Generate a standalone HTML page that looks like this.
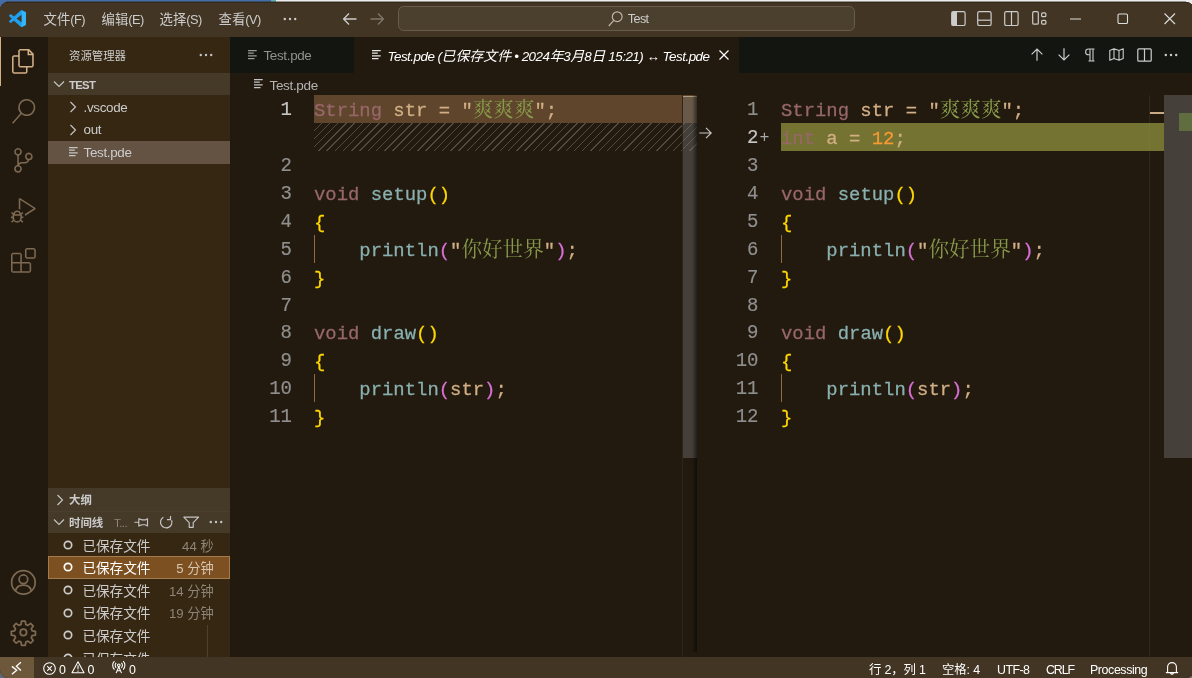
<!DOCTYPE html>
<html lang="zh-CN">
<head>
<meta charset="utf-8">
<title>Test.pde - Test - Visual Studio Code</title>
<style>
*{box-sizing:border-box;margin:0;padding:0}
html,body{width:1192px;height:678px;overflow:hidden;background:#221a0f}
body{position:relative;font-family:"Liberation Sans","Noto Sans CJK SC",sans-serif;font-size:13.4px;color:#cccccc}
.a{position:absolute}
.t{white-space:nowrap}
.cj{font-size:13.900px;letter-spacing:0}
svg{display:block;overflow:visible}
#back{left:0;top:0;width:1192px;height:12px;background:linear-gradient(90deg,#456ea8 0,#456ea8 271px,#5fb0b0 271px,#5fb0b0 276px,#ececec 276px)}
#back2{left:0;top:660px;width:12px;height:18px;background:#5e6a80}
#win{left:0;top:1.5px;width:1193.500px;height:676.500px;border-radius:8px;overflow:hidden;background:#221a0f}
#w{left:0;top:-1.5px;width:1192px;height:678px;will-change:transform}
.ln,.cl{position:absolute;height:27.87px;line-height:27.87px;font-family:"Liberation Mono","Noto Serif CJK SC",monospace;font-size:18.900px;white-space:pre;transform-origin:0 19.500px;transform:translateY(2.600px) scaleY(1.020);-webkit-text-stroke:0.250px currentColor}
.ln{text-align:right;color:#858585;font-size:19px;transform:translateY(2.500px) scaleY(1.060);-webkit-text-stroke:0.150px currentColor}
.cl{color:#d3af86}
.cl i{display:inline-block;line-height:0;font-style:normal;font-family:"Noto Serif CJK SC",serif;font-size:20.600px;letter-spacing:0;transform:translateY(0.300px) scaleY(1.000);-webkit-text-stroke:0}
.k{color:#98676a}.f{color:#8ab1b0}.s{color:#889b4a}.n{color:#f79a32}.y{color:#ffd700}.p{color:#da70d6}
</style>
</head>
<body>
<div id="back" class="a"></div>
<div id="back2" class="a"></div>
<div class="a" style="left:1182px;top:668px;width:10px;height:10px;background:#77726a"></div>
<div class="a" style="left:6px;top:1px;width:1180px;height:1px;background:rgba(51,41,26,0.450)"></div>
<div id="win" class="a"><div id="w" class="a">
<div class="a" style="left:-1px;top:1.5px;width:1194px;height:35.0px;background:#423523;"></div>
<div class="a" style="left:-1px;top:1.5px;width:1194px;height:1.1px;background:#33291a;"></div>
<svg class="a" style="left:8.8px;top:10px" width="17" height="17.2" viewBox="0 0 100 100" ><path d="M70.9119 99.3171C72.4869 99.9307 74.2828 99.8914 75.8725 99.1264L96.4608 89.2197C98.6242 88.1787 100 85.9892 100 83.5872V16.4133C100 14.0113 98.6243 11.8218 96.4609 10.7808L75.8725 0.873756C73.7862 -0.130129 71.3446 0.11576 69.5135 1.44695C69.252 1.63711 69.0028 1.84943 68.769 2.08341L29.3551 38.0415L12.1872 25.0096C10.589 23.7965 8.35363 23.8959 6.86933 25.2461L1.36303 30.2549C-0.452552 31.9064 -0.454633 34.7627 1.35853 36.417L16.2471 50.0001L1.35853 63.5832C-0.454633 65.2374 -0.452552 68.0938 1.36303 69.7453L6.86933 74.7541C8.35363 76.1043 10.589 76.2037 12.1872 74.9905L29.3551 61.9587L68.769 97.9167C69.3925 98.5406 70.1246 99.0104 70.9119 99.3171ZM75.0152 27.2989L45.1091 50.0001L75.0152 72.7012V27.2989Z" fill="#1f9fef" fill-rule="evenodd"/><path d="M75 0.500L96.500 10.800C98.600 11.800 100 14 100 16.400V83.600C100 86 98.600 88.200 96.500 89.200L75 99.500Z" fill="#35b4f8"/></svg>
<div class="a t" style="left:43.5px;top:2.3px;height:35px;line-height:35px;font-size:13.4px;color:#cccccc;">文件<span style="font-size:12.800px;letter-spacing:-0.600px">(F)</span></div>
<div class="a t" style="left:101.5px;top:2.3px;height:35px;line-height:35px;font-size:13.4px;color:#cccccc;">编辑<span style="font-size:12.800px;letter-spacing:-0.600px">(E)</span></div>
<div class="a t" style="left:159.5px;top:2.3px;height:35px;line-height:35px;font-size:13.4px;color:#cccccc;">选择<span style="font-size:12.800px;letter-spacing:-0.600px">(S)</span></div>
<div class="a t" style="left:218.5px;top:2.3px;height:35px;line-height:35px;font-size:13.4px;color:#cccccc;">查看<span style="font-size:12.800px;letter-spacing:-0.600px">(V)</span></div>
<svg class="a" style="left:282px;top:16px" width="16" height="6" viewBox="0 0 16 6" ><circle cx="2.8" cy="3" r="1.2" fill="#cccccc"/><circle cx="8.0" cy="3" r="1.2" fill="#cccccc"/><circle cx="13.2" cy="3" r="1.2" fill="#cccccc"/></svg>
<svg class="a" style="left:342px;top:11.5px" width="16" height="14" viewBox="0 0 16 14" fill="none" stroke="#cccccc" stroke-width="1.3" ><path d="M14.500 7H2M7 1.500L1.600 7L7 12.500"/></svg>
<svg class="a" style="left:369px;top:11.5px" width="16" height="14" viewBox="0 0 16 14" fill="none" stroke="#7f776b" stroke-width="1.3" ><path d="M1.500 7H14M9 1.500L14.400 7L9 12.500"/></svg>
<div class="a" style="left:398.3px;top:5.9px;width:456.8px;height:25.4px;background:#4b3f2e;border-radius:5.500px;border:1px solid #675c4a"></div>
<svg class="a" style="left:607.6px;top:10.6px" width="15" height="15.5" viewBox="0 0 15 15.500" fill="none" stroke="#c0b8aa" stroke-width="1.15" ><path d="M6 9.200L0.800 15M14.100 5.700A4.900 4.900 0 1 1 4.300 5.700A4.900 4.900 0 1 1 14.100 5.700"/></svg>
<div class="a t" style="left:627.8px;top:7.2px;height:24px;line-height:24px;font-size:12.6px;color:#cccccc;letter-spacing:-0.6px;">Test</div>
<svg class="a" style="left:950.5px;top:10.9px" width="16" height="16" viewBox="0 0 16 16" fill="none" stroke="#cccccc" stroke-width="1.200"><rect x="0.700" y="0.700" width="13.400" height="13.800" rx="1.600"/><path d="M1 1H6V14.200H1Z" fill="#cccccc" stroke="none"/></svg>
<svg class="a" style="left:977.3px;top:10.9px" width="16" height="16" viewBox="0 0 16 16" fill="none" stroke="#cccccc" stroke-width="1.200"><rect x="0.700" y="0.700" width="13.400" height="13.800" rx="1.600"/><path d="M1 9.200H13.800"/></svg>
<svg class="a" style="left:1004.1999999999999px;top:10.9px" width="16" height="16" viewBox="0 0 16 16" fill="none" stroke="#cccccc" stroke-width="1.200"><rect x="0.700" y="0.700" width="13.400" height="13.800" rx="1.600"/><path d="M7.500 1V14.200"/></svg>
<svg class="a" style="left:1031.7px;top:11.4px" width="16" height="15" viewBox="0 0 16 15" fill="none" stroke="#cccccc" stroke-width="1.200"><rect x="0.700" y="0.700" width="5.600" height="12.500" rx="1.300"/><rect x="9.600" y="1.800" width="4.300" height="3.900" rx="1.300"/><rect x="9.600" y="9.300" width="4.300" height="3.900" rx="1.300"/></svg>
<svg class="a" style="left:1070px;top:17.6px" width="12" height="2" viewBox="0 0 12 2" fill="none" stroke="#dddddd" stroke-width="1.0" ><path d="M0 1H11"/></svg>
<svg class="a" style="left:1117px;top:13px" width="12" height="12" viewBox="0 0 12 12" fill="none" stroke="#dddddd" stroke-width="1.100"><rect x="1" y="1" width="9.500" height="9.500" rx="1.300"/></svg>
<svg class="a" style="left:1164px;top:13px" width="12" height="12" viewBox="0 0 12 12" fill="none" stroke="#dddddd" stroke-width="1.1" ><path d="M0.500 0.500L11 11M11 0.500L0.500 11"/></svg>
<div class="a" style="left:-1px;top:36.5px;width:49.4px;height:620.1px;background:#221a0f;"></div>
<div class="a" style="left:-1px;top:36.5px;width:2.2px;height:49.6px;background:#d3af86;"></div>
<svg class="a" style="left:11.2px;top:49px" width="24.8" height="24.8" viewBox="0 0 24 24" ><path d="M17.5 0h-9L7 1.500V6H2.500L1 7.500v15.070L2.500 24h12.070L16 22.570V18h4.700l1.300-1.430V4.500L17.500 0zm0 2.120l2.380 2.380H17.500V2.120zm-3 20.380h-12v-15H7v9.070L8.500 18h6v4.500zm6-6h-12v-15H16V6h4.500v10.500z" fill="#d3af86"/></svg>
<svg class="a" style="left:11.2px;top:98.7px" width="24.8" height="24.8" viewBox="0 0 24 24" ><path d="M15.250 0a8.250 8.250 0 0 0-6.180 13.720L1 22.880l1.120 1 8.050-9.120A8.251 8.251 0 1 0 15.250.010V0zm0 15a6.750 6.750 0 1 1 0-13.500 6.750 6.750 0 0 1 0 13.500z" fill="#7e6952"/></svg>
<svg class="a" style="left:11.2px;top:148.4px" width="24.8" height="24.8" viewBox="0 0 24 24" ><path d="M21.007 8.222A3.738 3.738 0 0 0 15.045 5.200a3.737 3.737 0 0 0 1.156 6.583 2.988 2.988 0 0 1-2.668 1.670h-2.990a4.456 4.456 0 0 0-2.989 1.165V7.400a3.737 3.737 0 1 0-1.494 0v9.117a3.776 3.776 0 1 0 1.816.099 2.990 2.990 0 0 1 2.668-1.667h2.990a4.484 4.484 0 0 0 4.223-3.039 3.736 3.736 0 0 0 3.250-3.687zM4.565 3.738a2.242 2.242 0 1 1 4.484 0 2.242 2.242 0 0 1-4.484 0zm4.484 16.441a2.242 2.242 0 1 1-4.484 0 2.242 2.242 0 0 1 4.484 0zm8.221-9.715a2.242 2.242 0 1 1 0-4.485 2.242 2.242 0 0 1 0 4.485z" fill="#7e6952"/></svg>
<svg class="a" style="left:11.2px;top:198.1px" width="24.8" height="24.8" viewBox="0 0 24 24" ><path d="M10.940 13.500l-1.320 1.320a3.730 3.730 0 0 0-7.240 0L1.060 13.500 0 14.560l1.720 1.720-.220.220V18H0v1.500h1.500v.080c.077.489.214.966.410 1.420L0 22.940 1.060 24l1.650-1.650A4.308 4.308 0 0 0 6 24a4.310 4.310 0 0 0 3.290-1.650L10.940 24 12 22.940 10.090 21c.198-.464.336-.951.410-1.450v-.1H12V18h-1.500v-1.500l-.220-.220L12 14.560l-1.060-1.060zM6 13.500a2.250 2.250 0 0 1 2.250 2.250h-4.500A2.250 2.250 0 0 1 6 13.500zm3 6a3.330 3.330 0 0 1-3 3 3.330 3.330 0 0 1-3-3v-2.250h6v2.250zm14.760-9.900v1.260L13.500 17.370V15.600l8.500-5.370L9 2v9.460a5.070 5.070 0 0 0-1.500-.720V.630L8.640 0l15.120 9.600z" fill="#7e6952"/></svg>
<svg class="a" style="left:11.2px;top:247.8px" width="24.8" height="24.8" viewBox="0 0 24 24" ><path d="M13.500 1.500L15 0h7.500L24 1.500V9l-1.500 1.500H15L13.500 9V1.500zm1.500 0V9h7.500V1.500H15zM0 15V6l1.500-1.500H9L10.500 6v7.500H18l1.500 1.500v7.500L18 24H1.500L0 22.500V15zm9-1.500V6H1.500v7.500H9zM9 15H1.500v7.500H9V15zm1.500 7.500H18V15h-7.500v7.500z" fill="#7e6952"/></svg>
<svg class="a" style="left:10.899999999999999px;top:570.1px" width="24.8" height="24.8" viewBox="0 0 24 24" fill="none" stroke="#7e6952" stroke-width="1.650"><circle cx="12" cy="12" r="11.400"/><circle cx="12" cy="9" r="4.200"/><path d="M4.300 20.200Q5.600 14.600 12 14.600Q18.400 14.600 19.700 20.200"/></svg>
<svg class="a" style="left:11.1px;top:619.7px" width="24.8" height="24.8" viewBox="0 0 24 24" fill="none" stroke="#7e6952" stroke-width="1.600" stroke-linejoin="round"><g transform="translate(12 12) scale(1.060) translate(-12 -12)"><circle cx="12" cy="12" r="2.900"/><path d="M10.300 1.800h3.400l.5 3 1.900.8 2.500-1.800 2.400 2.400-1.800 2.500.8 1.900 3 .5v3.400l-3 .5-.8 1.900 1.800 2.500-2.400 2.400-2.500-1.800-1.900.8-.5 3h-3.400l-.5-3-1.900-.8-2.500 1.800-2.400-2.400 1.800-2.500-.8-1.900-3-.5v-3.400l3-.5.8-1.900-1.800-2.500 2.400-2.400 2.500 1.800 1.900-.8z"/></g></svg>
<div class="a" style="left:48.4px;top:36.5px;width:181.9px;height:620.1px;background:#362712;"></div>
<div class="a t" style="left:69px;top:38.4px;height:36px;line-height:36px;font-size:11.4px;color:#cccccc;">资源管理器</div>
<svg class="a" style="left:198px;top:51.5px" width="16" height="6" viewBox="0 0 16 6" ><circle cx="2.8" cy="3" r="1.2" fill="#c5c5c5"/><circle cx="8.0" cy="3" r="1.2" fill="#c5c5c5"/><circle cx="13.2" cy="3" r="1.2" fill="#c5c5c5"/></svg>
<div class="a" style="left:48.4px;top:72.9px;width:181.9px;height:22.3px;background:#453928;"></div>
<svg class="a" style="left:53.2px;top:80.30000000000001px" width="12" height="8" viewBox="0 0 12 8" fill="none" stroke="#c5c5c5" stroke-width="1.15" ><path d="M1 1.5L6 6.5L11 1.5"/></svg>
<div class="a t" style="left:69px;top:74.10000000000001px;height:22.87px;line-height:22.87px;font-size:11.4px;color:#cccccc;letter-spacing:-0.75px;font-weight:bold;">TEST</div>
<svg class="a" style="left:68.5px;top:100.8px" width="8" height="12" viewBox="0 0 8 12" fill="none" stroke="#c5c5c5" stroke-width="1.15" ><path d="M1.5 1L6.5 6L1.5 11"/></svg><div class="a t" style="left:83.6px;top:96.60000000000001px;height:22.87px;line-height:22.87px;font-size:13.4px;color:#cccccc;letter-spacing:-0.33px;">.vscode</div>
<svg class="a" style="left:68.5px;top:123.67000000000002px" width="8" height="12" viewBox="0 0 8 12" fill="none" stroke="#c5c5c5" stroke-width="1.15" ><path d="M1.5 1L6.5 6L1.5 11"/></svg><div class="a t" style="left:83.6px;top:119.47000000000001px;height:22.87px;line-height:22.87px;font-size:13.4px;color:#cccccc;letter-spacing:-0.33px;">out</div>
<div class="a" style="left:48.4px;top:140.94px;width:181.9px;height:22.87px;background:#645342;"></div><svg class="a" style="left:68.6px;top:147.24px" width="9" height="9.2" viewBox="0 0 9 9.2" ><path d="M0 0.550H8.700M0 3.220H5.800M0 5.880H8.700M0 8.550H6.500" stroke="#c5c5c5" stroke-width="1.250" fill="none"/></svg><div class="a t" style="left:83.6px;top:142.34px;height:22.87px;line-height:22.87px;font-size:13.4px;color:#cccccc;letter-spacing:-0.33px;">Test.pde</div>
<div class="a" style="left:48.4px;top:488.2px;width:181.9px;height:45.2px;background:#453928;"></div>
<div class="a" style="left:48.4px;top:510.5px;width:181.9px;height:1px;background:#4a3e2e;"></div>
<svg class="a" style="left:56px;top:493.7px" width="8" height="12" viewBox="0 0 8 12" fill="none" stroke="#c5c5c5" stroke-width="1.15" ><path d="M1.5 1L6.5 6L1.5 11"/></svg>
<div class="a t" style="left:69px;top:489.2px;height:22.87px;line-height:22.87px;font-size:11.4px;color:#cccccc;font-weight:bold;">大纲</div>
<svg class="a" style="left:53.2px;top:518.4px" width="12" height="8" viewBox="0 0 12 8" fill="none" stroke="#c5c5c5" stroke-width="1.15" ><path d="M1 1.5L6 6.5L11 1.5"/></svg>
<div class="a t" style="left:69px;top:511.8px;height:22.87px;line-height:22.87px;font-size:11.4px;color:#cccccc;font-weight:bold;">时间线</div>
<div class="a t" style="left:114px;top:511.8px;height:22.87px;line-height:22.87px;font-size:11.4px;color:#8e8578;letter-spacing:-0.5px;">T...</div>
<svg class="a" style="left:0px;top:0px" width="30" height="30" viewBox="0 0 30 30" fill="none" stroke="#c5c5c5" stroke-width="1.15" ><path d="M134.400 522.200H138.800M138.800 518.200V526.400M147.500 518.200V526.400M138.800 518.700L142.100 519.900H145.300L147.500 518.700M138.800 525.900L142.100 524.700H145.300L147.500 525.900"/></svg>
<svg class="a" style="left:0px;top:0px" width="30" height="30" viewBox="0 0 30 30" fill="none" stroke="#c5c5c5" stroke-width="1.2" ><path d="M163.400 517.200A5.700 5.700 0 1 0 171.600 520.200M170.500 516V519.700H166.900"/></svg>
<svg class="a" style="left:0px;top:0px" width="30" height="30" viewBox="0 0 30 30" fill="none" stroke="#c5c5c5" stroke-width="1.15" stroke-linejoin="round"><path d="M183.800 517.100H198.600L193.200 522.600V527.300H189.200V522.600Z"/></svg>
<svg class="a" style="left:207.5px;top:519.3px" width="16" height="6" viewBox="0 0 16 6" ><circle cx="2.8" cy="3" r="1.2" fill="#c5c5c5"/><circle cx="8.0" cy="3" r="1.2" fill="#c5c5c5"/><circle cx="13.2" cy="3" r="1.2" fill="#c5c5c5"/></svg>
<svg class="a" style="left:63px;top:539.8px" width="10" height="10" viewBox="0 0 10 10" ><circle cx="5" cy="5" r="3.700" fill="none" stroke="#cccccc" stroke-width="1.700"/></svg>
<div class="a t" style="left:82.4px;top:535.5px;height:22.6px;line-height:22.6px;font-size:13.6px;color:#cccccc;">已保存文件</div>
<div class="a t" style="right:978.4px;top:535.5px;height:22.6px;line-height:22.6px;font-size:13.2px;color:#8e8578;">44 秒</div>
<div class="a" style="left:48.4px;top:556.1px;width:181.9px;height:22.6px;background:#7c5021;outline:1px solid #a57a4c;outline-offset:-1px;"></div>
<svg class="a" style="left:63px;top:562.4px" width="10" height="10" viewBox="0 0 10 10" ><circle cx="5" cy="5" r="3.700" fill="none" stroke="#ffffff" stroke-width="1.700"/></svg>
<div class="a t" style="left:82.4px;top:558.1px;height:22.6px;line-height:22.6px;font-size:13.6px;color:#ffffff;">已保存文件</div>
<div class="a t" style="right:978.4px;top:558.1px;height:22.6px;line-height:22.6px;font-size:13.2px;color:#d8c6b0;">5 分钟</div>
<svg class="a" style="left:63px;top:585.0px" width="10" height="10" viewBox="0 0 10 10" ><circle cx="5" cy="5" r="3.700" fill="none" stroke="#cccccc" stroke-width="1.700"/></svg>
<div class="a t" style="left:82.4px;top:580.7px;height:22.6px;line-height:22.6px;font-size:13.6px;color:#cccccc;">已保存文件</div>
<div class="a t" style="right:978.4px;top:580.7px;height:22.6px;line-height:22.6px;font-size:13.2px;color:#8e8578;">14 分钟</div>
<svg class="a" style="left:63px;top:607.6px" width="10" height="10" viewBox="0 0 10 10" ><circle cx="5" cy="5" r="3.700" fill="none" stroke="#cccccc" stroke-width="1.700"/></svg>
<div class="a t" style="left:82.4px;top:603.3000000000001px;height:22.6px;line-height:22.6px;font-size:13.6px;color:#cccccc;">已保存文件</div>
<div class="a t" style="right:978.4px;top:603.3000000000001px;height:22.6px;line-height:22.6px;font-size:13.2px;color:#8e8578;">19 分钟</div>
<svg class="a" style="left:63px;top:630.2px" width="10" height="10" viewBox="0 0 10 10" ><circle cx="5" cy="5" r="3.700" fill="none" stroke="#cccccc" stroke-width="1.700"/></svg>
<div class="a t" style="left:82.4px;top:625.9000000000001px;height:22.6px;line-height:22.6px;font-size:13.6px;color:#cccccc;">已保存文件</div>
<svg class="a" style="left:63px;top:652.8000000000001px" width="10" height="10" viewBox="0 0 10 10" ><circle cx="5" cy="5" r="3.700" fill="none" stroke="#cccccc" stroke-width="1.700"/></svg>
<div class="a t" style="left:82.4px;top:648.5000000000001px;height:22.6px;line-height:22.6px;font-size:13.6px;color:#cccccc;">已保存文件</div>
<div class="a" style="left:206.7px;top:624.7px;width:1px;height:33px;background:#4d402c;"></div>
<div class="a" style="left:230.3px;top:36.5px;width:961.7px;height:36.099999999999994px;background:#131510;"></div>
<svg class="a" style="left:248.3px;top:49.8px" width="9" height="9.2" viewBox="0 0 9 9.2" ><path d="M0 0.550H8.700M0 3.220H5.800M0 5.880H8.700M0 8.550H6.500" stroke="#9a9a94" stroke-width="1.250" fill="none"/></svg>
<div class="a t" style="left:263.5px;top:37.8px;height:36px;line-height:36px;font-size:13.4px;color:#92928c;letter-spacing:-0.33px;">Test.pde</div>
<div class="a" style="left:354px;top:36.5px;width:385px;height:36.099999999999994px;background:#221a0f;"></div>
<svg class="a" style="left:372.3px;top:49.8px" width="9" height="9.2" viewBox="0 0 9 9.2" ><path d="M0 0.550H8.700M0 3.220H5.800M0 5.880H8.700M0 8.550H6.500" stroke="#e8e8e8" stroke-width="1.250" fill="none"/></svg>
<div class="a t" style="left:387.5px;top:38.0px;height:36px;line-height:36px;font-size:13.4px;color:#ffffff;letter-spacing:-0.5px;font-style:italic;">Test.pde (<span class="cj">已保存文件</span> • 2024<span class="cj">年</span>3<span class="cj">月</span>8<span class="cj">日</span> 15:21) ↔ Test.pde</div>
<svg class="a" style="left:718.5px;top:50px" width="10" height="10" viewBox="0 0 10 10" fill="none" stroke="#ffffff" stroke-width="1.2" ><path d="M0.500 0.500L9.500 9.500M9.500 0.500L0.500 9.500"/></svg>
<svg class="a" style="left:1031px;top:47.8px" width="12" height="13" viewBox="0 0 12 13" fill="none" stroke="#cccccc" stroke-width="1.2" ><path d="M6 12.800V1M0.600 6.400L6 1L11.400 6.400"/></svg>
<svg class="a" style="left:1057.6px;top:47.8px" width="12" height="13" viewBox="0 0 12 13" fill="none" stroke="#cccccc" stroke-width="1.2" ><path d="M6 0.200V12M0.600 6.600L6 12L11.400 6.600"/></svg>
<svg class="a" style="left:1084.5px;top:47.5px" width="10" height="14" viewBox="0 0 10 14" fill="none" stroke="#cccccc" stroke-width="1.1" ><path d="M5 13V1M8 13V1M9.500 1H3.500A2.700 2.700 0 0 0 3.500 6.800H5M3.500 13H9.500"/></svg>
<svg class="a" style="left:1109px;top:48px" width="15" height="13" viewBox="0 0 15 13" fill="none" stroke="#cccccc" stroke-width="1.1" stroke-linejoin="round"><path d="M0.800 2.500L5 0.800L10 2.500L14.200 0.800V10.500L10 12.200L5 10.500L0.800 12.200ZM5 0.800V10.500M10 2.500V12.200"/></svg>
<svg class="a" style="left:1136.5px;top:47.5px" width="15" height="14" viewBox="0 0 15 14" fill="none" stroke="#cccccc" stroke-width="1.200"><rect x="0.800" y="0.800" width="13.400" height="12.400" rx="1"/><path d="M7.500 1V13"/></svg>
<svg class="a" style="left:1163px;top:51.5px" width="16" height="6" viewBox="0 0 16 6" ><circle cx="2.8" cy="3" r="1.2" fill="#cccccc"/><circle cx="8.0" cy="3" r="1.2" fill="#cccccc"/><circle cx="13.2" cy="3" r="1.2" fill="#cccccc"/></svg>
<svg class="a" style="left:254px;top:78.9px" width="9" height="9.2" viewBox="0 0 9 9.2" ><path d="M0 0.550H8.700M0 3.220H5.800M0 5.880H8.700M0 8.550H6.500" stroke="#c4c4c4" stroke-width="1.250" fill="none"/></svg>
<div class="a t" style="left:269.5px;top:73.69999999999999px;height:23px;line-height:23px;font-size:13.5px;color:#b4b4b4;letter-spacing:-0.33px;">Test.pde</div>
<div class="a" style="left:314px;top:95.43px;width:382.5px;height:27.87px;background:#5e452b;"></div>
<div class="a" style="left:314px;top:123.30000000000001px;width:382.5px;height:27.87px;background:repeating-linear-gradient(-45deg,#221a0f 0,#221a0f 4.830px,#504a41 4.830px,#504a41 5.830px);"></div>
<div class="ln" style="left:232px;top:95.43px;width:60px;color:#c6c6c6">1</div><div class="cl" style="left:314px;top:95.43px"><span class="k">String</span> str = "<i class="s">爽爽爽</i>";</div><div class="ln" style="left:232px;top:151.17000000000002px;width:60px;color:#8f8f8f">2</div><div class="ln" style="left:232px;top:179.04000000000002px;width:60px;color:#8f8f8f">3</div><div class="cl" style="left:314px;top:179.04000000000002px"><span class="k">void</span> <span class="f">setup</span><span class="y">()</span></div><div class="ln" style="left:232px;top:206.91000000000003px;width:60px;color:#8f8f8f">4</div><div class="cl" style="left:314px;top:206.91000000000003px"><span class="y">{</span></div><div class="ln" style="left:232px;top:234.78px;width:60px;color:#8f8f8f">5</div><div class="cl" style="left:314px;top:234.78px">    <span class="f">println</span><span class="p">(</span>"<i class="s">你好世界</i>"<span class="p">)</span>;</div><div class="a" style="left:314px;top:234.78px;width:1.2px;height:27.87px;background:#94693f;"></div><div class="ln" style="left:232px;top:262.65px;width:60px;color:#8f8f8f">6</div><div class="cl" style="left:314px;top:262.65px"><span class="y">}</span></div><div class="ln" style="left:232px;top:290.52px;width:60px;color:#8f8f8f">7</div><div class="ln" style="left:232px;top:318.39px;width:60px;color:#8f8f8f">8</div><div class="cl" style="left:314px;top:318.39px"><span class="k">void</span> <span class="f">draw</span><span class="y">()</span></div><div class="ln" style="left:232px;top:346.26px;width:60px;color:#8f8f8f">9</div><div class="cl" style="left:314px;top:346.26px"><span class="y">{</span></div><div class="ln" style="left:232px;top:374.13px;width:60px;color:#8f8f8f">10</div><div class="cl" style="left:314px;top:374.13px">    <span class="f">println</span><span class="p">(</span>str<span class="p">)</span>;</div><div class="a" style="left:314px;top:374.13px;width:1.2px;height:27.87px;background:#94693f;"></div><div class="ln" style="left:232px;top:402.0px;width:60px;color:#8f8f8f">11</div><div class="cl" style="left:314px;top:402.0px"><span class="y">}</span></div>
<div class="a" style="left:682.5px;top:95.93px;width:14px;height:362px;background:rgba(121,121,121,0.4);"></div>
<div class="a" style="left:682.5px;top:95.93px;width:14px;height:1.5px;background:#b09a80;"></div>
<div class="a" style="left:682px;top:95.43px;width:1px;height:561.1700000000001px;background:#2e261b;"></div>
<div class="a" style="left:691.5px;top:95.43px;width:5.4px;height:556.5699999999999px;background:linear-gradient(90deg,rgba(0,0,0,0),rgba(0,0,0,0.500));"></div>
<div class="a" style="left:781px;top:123.30000000000001px;width:382.5px;height:27.87px;background:#747332;"></div>
<div class="ln" style="left:698.5px;top:95.43px;width:60px;color:#8f8f8f">1</div><div class="cl" style="left:781px;top:95.43px"><span class="k">String</span> str = "<i class="s">爽爽爽</i>";</div><div class="ln" style="left:698.5px;top:123.30000000000001px;width:60px;color:#c6c6c6">2</div><div class="cl" style="left:781px;top:123.30000000000001px"><span class="k">int</span> a = <span class="n">12</span>;</div><div class="ln" style="left:698.5px;top:151.17000000000002px;width:60px;color:#8f8f8f">3</div><div class="ln" style="left:698.5px;top:179.04000000000002px;width:60px;color:#8f8f8f">4</div><div class="cl" style="left:781px;top:179.04000000000002px"><span class="k">void</span> <span class="f">setup</span><span class="y">()</span></div><div class="ln" style="left:698.5px;top:206.91000000000003px;width:60px;color:#8f8f8f">5</div><div class="cl" style="left:781px;top:206.91000000000003px"><span class="y">{</span></div><div class="ln" style="left:698.5px;top:234.78px;width:60px;color:#8f8f8f">6</div><div class="cl" style="left:781px;top:234.78px">    <span class="f">println</span><span class="p">(</span>"<i class="s">你好世界</i>"<span class="p">)</span>;</div><div class="a" style="left:781px;top:234.78px;width:1.2px;height:27.87px;background:#94693f;"></div><div class="ln" style="left:698.5px;top:262.65px;width:60px;color:#8f8f8f">7</div><div class="cl" style="left:781px;top:262.65px"><span class="y">}</span></div><div class="ln" style="left:698.5px;top:290.52px;width:60px;color:#8f8f8f">8</div><div class="ln" style="left:698.5px;top:318.39px;width:60px;color:#8f8f8f">9</div><div class="cl" style="left:781px;top:318.39px"><span class="k">void</span> <span class="f">draw</span><span class="y">()</span></div><div class="ln" style="left:698.5px;top:346.26px;width:60px;color:#8f8f8f">10</div><div class="cl" style="left:781px;top:346.26px"><span class="y">{</span></div><div class="ln" style="left:698.5px;top:374.13px;width:60px;color:#8f8f8f">11</div><div class="cl" style="left:781px;top:374.13px">    <span class="f">println</span><span class="p">(</span>str<span class="p">)</span>;</div><div class="a" style="left:781px;top:374.13px;width:1.2px;height:27.87px;background:#94693f;"></div><div class="ln" style="left:698.5px;top:402.0px;width:60px;color:#8f8f8f">12</div><div class="cl" style="left:781px;top:402.0px"><span class="y">}</span></div>
<svg class="a" style="left:699px;top:126.63000000000001px" width="13" height="12" viewBox="0 0 13 12" fill="none" stroke="#c5c5c5" stroke-width="1.15" ><path d="M0.300 6H12M7 0.800L12.200 6L7 11.200"/></svg>
<div class="a t" style="left:759.600px;top:124.10000000000001px;height:28px;line-height:28px;font-size:16.500px;color:#a8a8a8;font-family:'Liberation Mono',monospace">+</div>
<div class="a" style="left:1149px;top:95.43px;width:1px;height:561.1700000000001px;background:rgba(150,140,120,0.120);"></div>
<div class="a" style="left:1150px;top:112px;width:13.5px;height:1.8px;background:#caa985;"></div>
<div class="a" style="left:1163.5px;top:95.43px;width:30px;height:362.3px;background:#454039;"></div>
<div class="a" style="left:1179px;top:113px;width:14px;height:18px;background:#5f6d3f;"></div>
<div class="a" style="left:-1px;top:656.6px;width:1194px;height:22px;background:#423523;"></div>
<div class="a" style="left:-1px;top:656.6px;width:35px;height:22px;background:#6e583b;"></div>
<svg class="a" style="left:0px;top:0px" width="30" height="678" viewBox="0 0 30 678" fill="none" stroke="#ffffff" stroke-width="1.35" ><path d="M11.900 666.400L16.700 670.200L11.900 674.200M20.900 662.300L16.400 666.300L20.900 670.500"/></svg>
<svg class="a" style="left:42.5px;top:661.6px" width="13" height="13" viewBox="0 0 13 13" fill="none" stroke="#ffffff" stroke-width="1.100"><circle cx="6.500" cy="6.500" r="5.800"/><path d="M4.200 4.200L8.800 8.800M8.800 4.200L4.200 8.800"/></svg>
<div class="a t" style="left:59px;top:658.6px;height:22px;line-height:22px;font-size:12.4px;color:#ffffff;">0</div>
<svg class="a" style="left:70.5px;top:660.9px" width="14" height="12.6" viewBox="0 0 14 13" fill="none" stroke="#ffffff" stroke-width="1.100" stroke-linejoin="round"><path d="M7 0.800L13.200 12.200H0.800Z"/><path d="M7 4.500V8.500M7 9.800V11"/></svg>
<div class="a t" style="left:87.5px;top:658.6px;height:22px;line-height:22px;font-size:12.4px;color:#ffffff;">0</div>
<svg class="a" style="left:112.3px;top:660.2px" width="13.6" height="13.6" viewBox="0 0 14 14" fill="none" stroke="#ffffff" stroke-width="1.1" ><path d="M8.300 5.500A1.300 1.300 0 1 1 5.700 5.500A1.300 1.300 0 1 1 8.300 5.500M7 7L4.200 13.500M7 7L9.800 13.500M5.300 11H8.700M4.300 8A3.500 3.500 0 0 1 4.300 3M9.700 8A3.500 3.500 0 0 0 9.700 3M2.500 9.800A6 6 0 0 1 2.500 1.200M11.500 9.800A6 6 0 0 0 11.500 1.200"/></svg>
<div class="a t" style="left:129px;top:658.6px;height:22px;line-height:22px;font-size:12.4px;color:#ffffff;">0</div>
<div class="a t" style="left:869px;top:658.6px;height:22px;line-height:22px;font-size:12.4px;color:#ffffff;letter-spacing:-0.15px;">行 2，列 1</div>
<div class="a t" style="left:942px;top:658.6px;height:22px;line-height:22px;font-size:12.4px;color:#ffffff;letter-spacing:-0.1px;">空格: 4</div>
<div class="a t" style="left:997px;top:658.6px;height:22px;line-height:22px;font-size:12.4px;color:#ffffff;letter-spacing:-0.55px;">UTF-8</div>
<div class="a t" style="left:1046px;top:658.6px;height:22px;line-height:22px;font-size:12.4px;color:#ffffff;letter-spacing:-1.1px;">CRLF</div>
<div class="a t" style="left:1090px;top:658.6px;height:22px;line-height:22px;font-size:12.4px;color:#ffffff;letter-spacing:-0.4px;">Processing</div>
<svg class="a" style="left:0px;top:0px" width="30" height="678" viewBox="0 0 30 678" fill="none" stroke="#ffffff" stroke-width="1.1" stroke-linejoin="round"><path d="M1167.600 672.300V667A4.400 4.400 0 0 1 1176.400 667V672.300L1177.700 672.600H1166.300ZM1170.600 673.200A1.500 1.500 0 0 0 1173.400 673.200"/></svg>
</div></div>
</body>
</html>
